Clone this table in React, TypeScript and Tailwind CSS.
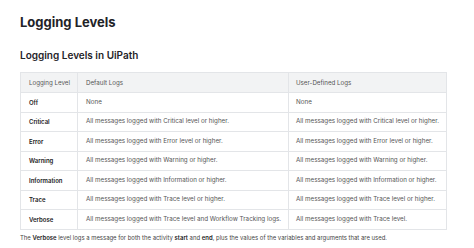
const ROWS = [
  ["Off", "None", "None"],
  ["Critical", "All messages logged with Critical level or higher.", "All messages logged with Critical level or higher."],
  ["Error", "All messages logged with Error level or higher.", "All messages logged with Error level or higher."],
  ["Warning", "All messages logged with Warning or higher.", "All messages logged with Warning or higher."],
  ["Information", "All messages logged with Information or higher.", "All messages logged with Information or higher."],
  ["Trace", "All messages logged with Trace level or higher.", "All messages logged with Trace level or higher."],
  ["Verbose", "All messages logged with Trace level and Workflow Tracking logs.", "All messages logged with Trace level."],
];

export default function App() {
  return (
    <div className="w-[474px] h-[248px] bg-white px-5 pt-[13px] font-['Inter',sans-serif] text-[#1f2328]">
      <h1 className="text-[13px] font-bold leading-[18px]">Logging Levels</h1>
      <h2 className="mt-[17px] text-[10px] font-semibold leading-[14px]">Logging Levels in UiPath</h2>

      <table className="mt-[10px] w-[427px] table-fixed border-collapse whitespace-nowrap text-[6.25px] leading-[9px] text-[#555]">
        <colgroup>
          <col className="w-[57px]" />
          <col className="w-[211px]" />
          <col />
        </colgroup>
        <thead>
          <tr className="h-[20px] bg-[#f2f3f4]">
            <th className="border border-[#e3e5e8] px-2 text-left text-[6.2px] font-normal">Logging Level</th>
            <th className="border border-[#e3e5e8] px-2 text-left text-[6.2px] font-normal">Default Logs</th>
            <th className="border border-[#e3e5e8] px-[7px] text-left text-[6.2px] font-normal">User-Defined Logs</th>
          </tr>
        </thead>
        <tbody>
          {ROWS.map(([level, def, user]) => (
            <tr key={level} className="h-[19.5px]">
              <td className="border border-[#e3e5e8] px-2 text-[6px] font-semibold text-[#222]">{level}</td>
              <td className="border border-[#e3e5e8] px-2">{def}</td>
              <td className="border border-[#e3e5e8] px-[7px]">{user}</td>
            </tr>
          ))}
        </tbody>
      </table>

      <p className="mt-[3px] text-[5.95px] leading-[10px] text-[#444]">
        The <span className="font-semibold text-[#222]">Verbose</span> level logs a message for both the activity{" "}
        <span className="font-semibold text-[#222]">start</span> and <span className="font-semibold text-[#222]">end</span>,
        plus the values of the variables and arguments that are used.
      </p>
    </div>
  );
}
